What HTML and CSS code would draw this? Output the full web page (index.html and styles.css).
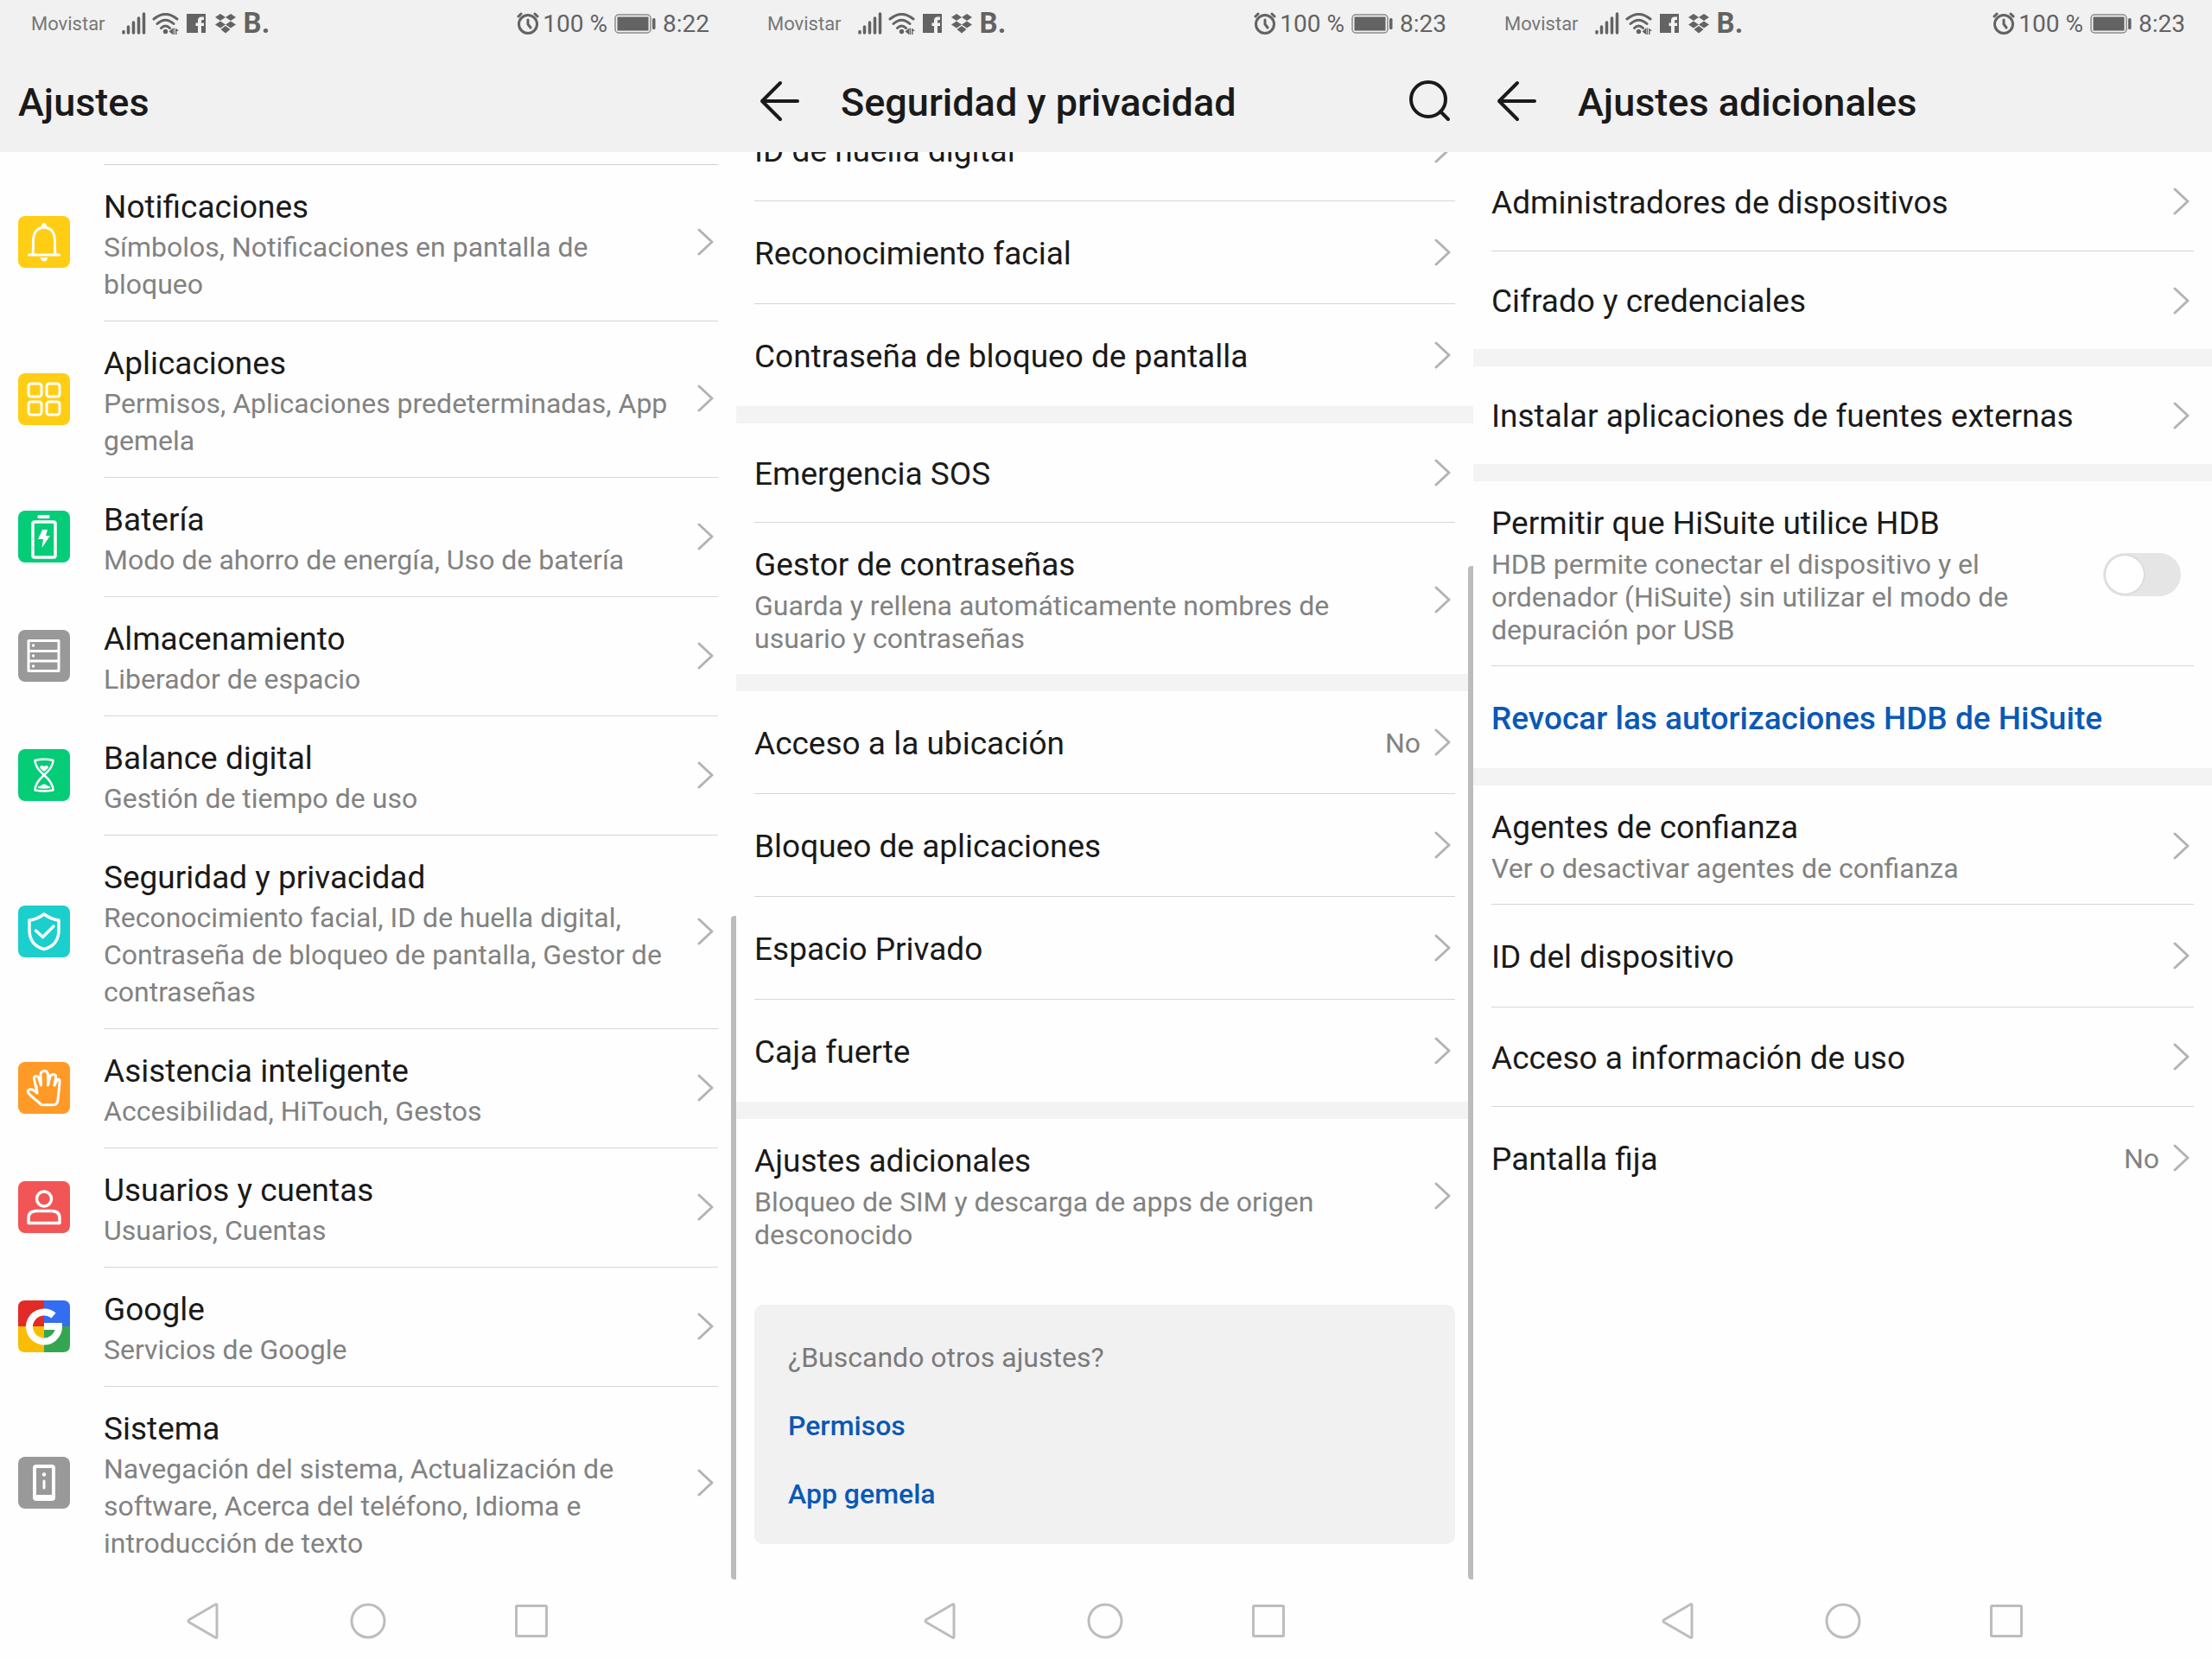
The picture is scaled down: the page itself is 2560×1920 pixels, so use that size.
FILE: index.html
```html
<!DOCTYPE html>
<html lang="es">
<head>
<meta charset="utf-8">
<meta name="viewport" content="width=device-width, initial-scale=1">
<title>Ajustes</title>
<link rel="stylesheet" href="styles.css">
</head>
<body>
<svg class="sprite" aria-hidden="true">
  <symbol id="chevron" viewBox="0 0 20 32"><path d="M2 2 17 16 2 30" fill="none" stroke="currentColor" stroke-width="3" stroke-linecap="round" stroke-linejoin="round"/></symbol>
  <symbol id="arrow" viewBox="0 0 48 48"><path d="M25 3 4 24 25 45M4 24H45" fill="none" stroke="currentColor" stroke-width="4" stroke-linecap="round" stroke-linejoin="round"/></symbol>
  <symbol id="search" viewBox="0 0 48 48"><circle cx="22" cy="22" r="20" fill="none" stroke="currentColor" stroke-width="4"/><path d="M36 36 45 45" fill="none" stroke="currentColor" stroke-width="4" stroke-linecap="round"/></symbol>
  <symbol id="signal" viewBox="0 0 28 26"><path d="M2 22.500V24M7.500 17V24M13.500 12V24M19.500 7V24M25.500 2V24" stroke="currentColor" stroke-width="3.500" stroke-linecap="round"/></symbol>
  <symbol id="wifi" viewBox="0 0 32 26"><g fill="none" stroke="currentColor" stroke-width="3" stroke-linecap="round"><path d="M2 8Q15.500-3 29 8M6 13.500Q15.500 5 25 13.500M10.500 18.500Q15.500 13.500 20.500 18.500"/></g><circle cx="15.500" cy="22.500" r="2.700" fill="currentColor"/><path d="M24 18.500V26L19.500 22.500ZM24.500 18.500H26V26H24.500ZM27 18.500 31 21.500 28.500 22V26H27Z" fill="currentColor"/></symbol>
  <symbol id="facebook" viewBox="0 0 22 22"><path d="M0 0H22V22H17V14H20V10.500H17V8.500Q17 7 18.500 7H20V3.500H17Q13 3.500 13 8V10.500H10.500V14H13V22H0Z" fill="currentColor"/></symbol>
  <symbol id="dropbox" viewBox="0 0 26 23"><path d="M7 0 13 4 7 8 1 4ZM19 0 25 4 19 8 13 4ZM7 8.500 13 12.500 7 16.500 1 12.500ZM19 8.500 25 12.500 19 16.500 13 12.500ZM13 14 18.500 18 13 22.500 7.500 18Z" fill="currentColor"/></symbol>
  <symbol id="alarm" viewBox="0 0 26 26"><g fill="none" stroke="currentColor" stroke-width="3" stroke-linecap="round"><circle cx="13" cy="14" r="10.500"/><path d="M13 9V14L16 18M2 5 5 2M24 5 21 2"/></g></symbol>
  <symbol id="battery" viewBox="0 0 48 23"><rect x="1" y="1" width="41" height="21" rx="4" fill="none" stroke="#8a8a8a" stroke-width="1.500"/><rect x="3.500" y="3.500" width="36" height="16" fill="currentColor"/><rect x="44" y="5" width="3.500" height="13" rx="1.500" fill="currentColor"/></symbol>
  <symbol id="nav-back" viewBox="0 0 44 44"><path d="M36 3.500V40.500Q36 42 34 41L4 23.500Q2 22 4 20.500L34 3Q36 2 36 3.500Z" fill="none" stroke="currentColor" stroke-width="3"/></symbol>
  <symbol id="nav-home" viewBox="0 0 44 44"><circle cx="22" cy="22" r="19" fill="none" stroke="currentColor" stroke-width="3"/></symbol>
  <symbol id="nav-recent" viewBox="0 0 44 44"><rect x="4.500" y="4.500" width="35" height="35" rx="1" fill="none" stroke="currentColor" stroke-width="3"/></symbol>

  <symbol id="bell" viewBox="0 0 60 60"><rect width="60" height="60" rx="8" fill="#ffce14"/><path d="M12.500 45H47.500M17 44Q17.500 40 17.500 28Q18 14 30 13Q42 14 42.500 28Q42.500 40 43 44" fill="none" stroke="#fff" stroke-width="3" stroke-linecap="round"/><path d="M27 13Q27 8 30 8T33 13ZM25.500 48H34.500Q33 52.500 30 52.500T25.500 48Z" fill="#fff"/></symbol>
  <symbol id="apps" viewBox="0 0 60 60"><rect width="60" height="60" rx="8" fill="#ffce14"/><g fill="none" stroke="#fff" stroke-width="3"><rect x="12" y="12" width="15" height="15" rx="3"/><rect x="33" y="12" width="15" height="15" rx="3"/><rect x="12" y="33" width="15" height="15" rx="3"/><rect x="33" y="33" width="15" height="15" rx="3"/></g></symbol>
  <symbol id="power" viewBox="0 0 60 60"><rect width="60" height="60" rx="8" fill="#05cc77"/><rect x="17" y="13" width="26" height="41" rx="2" fill="none" stroke="#fff" stroke-width="3.500"/><rect x="22.500" y="5" width="14" height="4" rx="1.500" fill="#fff"/><path d="M28 22H34L32 29H37L27.500 43 29 33H23Z" fill="#fff"/></symbol>
  <symbol id="storage" viewBox="0 0 60 60"><rect width="60" height="60" rx="8" fill="#999"/><path d="M12 12.500H47V47.500H12ZM12 24.500H47M12 36H47" fill="none" stroke="#fff" stroke-width="3" stroke-linejoin="round"/><g fill="#fff"><circle cx="17.500" cy="18" r="1.700"/><circle cx="17.500" cy="30" r="1.700"/><circle cx="17.500" cy="42" r="1.700"/></g></symbol>
  <symbol id="hourglass" viewBox="0 0 60 60"><rect width="60" height="60" rx="8" fill="#05cc77"/><path d="M19.500 13Q30 10.500 40.500 13Q40.500 21 30 30Q19.500 21 19.500 13ZM30 30Q40.500 39 40.500 47.500Q30 49.500 19.500 47.500Q19.500 39 30 30Z" fill="none" stroke="#fff" stroke-width="2.500" stroke-linejoin="round"/><path d="M30 26Q25 22 25 20.500Q27 18 30 20Q33 18 35 20.500Q35 22 30 26ZM22.500 45Q23 42.500 26 42.500Q30 38.500 34 42.500Q37 42.500 37.500 45Q30 46.500 22.500 45Z" fill="#fff"/></symbol>
  <symbol id="shield" viewBox="0 0 60 60"><rect width="60" height="60" rx="8" fill="#1bcfcd"/><path d="M30 10Q38 16 47 17V28Q47 46 30 50.500Q13 46 13 28V17Q22 16 30 10Z" fill="none" stroke="#fff" stroke-width="3.500" stroke-linejoin="round"/><path d="M20.500 29 28.500 36.500 41 24" fill="none" stroke="#fff" stroke-width="3.500" stroke-linecap="round" stroke-linejoin="round"/></symbol>
  <symbol id="hand" viewBox="0 0 60 60"><rect width="60" height="60" rx="8" fill="#ff9a28"/><path d="M21 31 18.500 20Q18 17 20.500 16.500T24 19L26.500 27 26 15Q26 11 30 10.500T34.500 15V27L37 17Q38 14 41 14.500T43.500 18L42 27 45 21Q48.500 18 48 24L46 44Q45.500 48.500 42 49.500Q34 50 27 49.500L14 38.500Q10 34 12 32.500Q16 30 22 36L21 28" fill="none" stroke="#fff" stroke-width="3" stroke-linejoin="round" stroke-linecap="round"/></symbol>
  <symbol id="user" viewBox="0 0 60 60"><rect width="60" height="60" rx="8" fill="#f25555"/><circle cx="30" cy="20.500" r="8.500" fill="none" stroke="#fff" stroke-width="3.500"/><path d="M12 48.500V43Q12 34.500 21 34.500H39Q48 34.500 48 43V48.500Z" fill="none" stroke="#fff" stroke-width="3.500" stroke-linejoin="round"/></symbol>
  <symbol id="google" viewBox="0 0 60 60"><path d="M30 0H8Q0 0 0 8V30H30Z" fill="#e12b27"/><path d="M30 0H52Q60 0 60 8V30H30Z" fill="#346df1"/><path d="M0 30H30V60H8Q0 60 0 52Z" fill="#fbbc05"/><path d="M30 30H60V52Q60 60 52 60H30Z" fill="#34a651"/><path d="M41 17.500A17 17 0 1 0 47 30H30" fill="none" stroke="#fff" stroke-width="8"/></symbol>
  <symbol id="phone-info" viewBox="0 0 60 60"><rect width="60" height="60" rx="8" fill="#999"/><path d="M21 9H39Q43 9 43 13V47Q43 51 39 51H21Q17 51 17 47V13Q17 9 21 9ZM21 13V44H39V13Z" fill="#fff" fill-rule="evenodd"/><circle cx="30" cy="20.500" r="2.200" fill="#fff"/><path d="M30 28V36" stroke="#fff" stroke-width="3" stroke-linecap="round"/></symbol>
</svg>

<main class="screens">
  <section class="screen">
    <header class="top">
      <div class="status">
        <span class="carrier">Movistar</span>
        <svg class="signal"><use href="#signal"/></svg><svg class="wifi"><use href="#wifi"/></svg><svg class="facebook"><use href="#facebook"/></svg><svg class="dropbox"><use href="#dropbox"/></svg><span class="brand">B.</span>
        <svg class="alarm"><use href="#alarm"/></svg><span class="level">100 %</span><svg class="battery"><use href="#battery"/></svg><time class="clock">8:22</time>
      </div>
      <div class="bar"><h1 class="heading">Ajustes</h1></div>
    </header>
    <div class="scroll">
      <ul class="menu">
        <li><a class="entry" href="#"><svg class="tile"><use href="#bell"/></svg><span class="body"><span class="text"><span class="title">Notificaciones</span><span class="summary">Símbolos, Notificaciones en pantalla de bloqueo</span></span><svg class="chevron"><use href="#chevron"/></svg></span></a></li>
        <li><a class="entry" href="#"><svg class="tile"><use href="#apps"/></svg><span class="body"><span class="text"><span class="title">Aplicaciones</span><span class="summary">Permisos, Aplicaciones predeterminadas, App gemela</span></span><svg class="chevron"><use href="#chevron"/></svg></span></a></li>
        <li><a class="entry" href="#"><svg class="tile"><use href="#power"/></svg><span class="body"><span class="text"><span class="title">Batería</span><span class="summary">Modo de ahorro de energía, Uso de batería</span></span><svg class="chevron"><use href="#chevron"/></svg></span></a></li>
        <li><a class="entry" href="#"><svg class="tile"><use href="#storage"/></svg><span class="body"><span class="text"><span class="title">Almacenamiento</span><span class="summary">Liberador de espacio</span></span><svg class="chevron"><use href="#chevron"/></svg></span></a></li>
        <li><a class="entry" href="#"><svg class="tile"><use href="#hourglass"/></svg><span class="body"><span class="text"><span class="title">Balance digital</span><span class="summary">Gestión de tiempo de uso</span></span><svg class="chevron"><use href="#chevron"/></svg></span></a></li>
        <li><a class="entry" href="#"><svg class="tile"><use href="#shield"/></svg><span class="body"><span class="text"><span class="title">Seguridad y privacidad</span><span class="summary">Reconocimiento facial, ID de huella digital, Contraseña de bloqueo de pantalla, Gestor de contraseñas</span></span><svg class="chevron"><use href="#chevron"/></svg></span></a></li>
        <li><a class="entry" href="#"><svg class="tile"><use href="#hand"/></svg><span class="body"><span class="text"><span class="title">Asistencia inteligente</span><span class="summary">Accesibilidad, HiTouch, Gestos</span></span><svg class="chevron"><use href="#chevron"/></svg></span></a></li>
        <li><a class="entry" href="#"><svg class="tile"><use href="#user"/></svg><span class="body"><span class="text"><span class="title">Usuarios y cuentas</span><span class="summary">Usuarios, Cuentas</span></span><svg class="chevron"><use href="#chevron"/></svg></span></a></li>
        <li><a class="entry" href="#"><svg class="tile"><use href="#google"/></svg><span class="body"><span class="text"><span class="title">Google</span><span class="summary">Servicios de Google</span></span><svg class="chevron"><use href="#chevron"/></svg></span></a></li>
        <li><a class="entry" href="#"><svg class="tile"><use href="#phone-info"/></svg><span class="body"><span class="text"><span class="title">Sistema</span><span class="summary">Navegación del sistema, Actualización de software, Acerca del teléfono, Idioma e introducción de texto</span></span><svg class="chevron"><use href="#chevron"/></svg></span></a></li>
      </ul>
      <div class="thumb thumb-short"></div>
    </div>
    <nav class="keys">
      <button type="button" aria-label="Atrás"><svg><use href="#nav-back"/></svg></button>
      <button type="button" aria-label="Inicio"><svg><use href="#nav-home"/></svg></button>
      <button type="button" aria-label="Recientes"><svg><use href="#nav-recent"/></svg></button>
    </nav>
  </section>

  <section class="screen">
    <header class="top">
      <div class="status">
        <span class="carrier">Movistar</span>
        <svg class="signal"><use href="#signal"/></svg><svg class="wifi"><use href="#wifi"/></svg><svg class="facebook"><use href="#facebook"/></svg><svg class="dropbox"><use href="#dropbox"/></svg><span class="brand">B.</span>
        <svg class="alarm"><use href="#alarm"/></svg><span class="level">100 %</span><svg class="battery"><use href="#battery"/></svg><time class="clock">8:23</time>
      </div>
      <div class="bar"><button class="tool back" type="button" aria-label="Volver"><svg><use href="#arrow"/></svg></button><h1 class="heading">Seguridad y privacidad</h1><button class="tool" type="button" aria-label="Buscar"><svg><use href="#search"/></svg></button></div>
    </header>
    <div class="scroll">
      <ul class="group scrolled">
        <li><a class="row" href="#"><span class="title">ID de huella digital</span><svg class="chevron"><use href="#chevron"/></svg></a></li>
        <li><a class="row" href="#"><span class="title">Reconocimiento facial</span><svg class="chevron"><use href="#chevron"/></svg></a></li>
        <li><a class="row" href="#"><span class="title">Contraseña de bloqueo de pantalla</span><svg class="chevron"><use href="#chevron"/></svg></a></li>
      </ul>
      <ul class="group">
        <li><a class="row compact" href="#"><span class="title">Emergencia SOS</span><svg class="chevron"><use href="#chevron"/></svg></a></li>
        <li><a class="row detailed" href="#"><span class="text"><span class="title">Gestor de contraseñas</span><span class="summary">Guarda y rellena automáticamente nombres de usuario y contraseñas</span></span><svg class="chevron"><use href="#chevron"/></svg></a></li>
      </ul>
      <ul class="group">
        <li><a class="row" href="#"><span class="title">Acceso a la ubicación</span><span class="value">No</span><svg class="chevron"><use href="#chevron"/></svg></a></li>
        <li><a class="row" href="#"><span class="title">Bloqueo de aplicaciones</span><svg class="chevron"><use href="#chevron"/></svg></a></li>
        <li><a class="row" href="#"><span class="title">Espacio Privado</span><svg class="chevron"><use href="#chevron"/></svg></a></li>
        <li><a class="row" href="#"><span class="title">Caja fuerte</span><svg class="chevron"><use href="#chevron"/></svg></a></li>
      </ul>
      <ul class="group">
        <li><a class="row detailed" href="#"><span class="text"><span class="title">Ajustes adicionales</span><span class="summary">Bloqueo de SIM y descarga de apps de origen desconocido</span></span><svg class="chevron"><use href="#chevron"/></svg></a></li>
      </ul>
      <aside class="hints">
        <p>¿Buscando otros ajustes?</p>
        <a href="#">Permisos</a>
        <a href="#">App gemela</a>
      </aside>
      <div class="thumb thumb-long"></div>
    </div>
    <nav class="keys">
      <button type="button" aria-label="Atrás"><svg><use href="#nav-back"/></svg></button>
      <button type="button" aria-label="Inicio"><svg><use href="#nav-home"/></svg></button>
      <button type="button" aria-label="Recientes"><svg><use href="#nav-recent"/></svg></button>
    </nav>
  </section>

  <section class="screen">
    <header class="top">
      <div class="status">
        <span class="carrier">Movistar</span>
        <svg class="signal"><use href="#signal"/></svg><svg class="wifi"><use href="#wifi"/></svg><svg class="facebook"><use href="#facebook"/></svg><svg class="dropbox"><use href="#dropbox"/></svg><span class="brand">B.</span>
        <svg class="alarm"><use href="#alarm"/></svg><span class="level">100 %</span><svg class="battery"><use href="#battery"/></svg><time class="clock">8:23</time>
      </div>
      <div class="bar"><button class="tool back" type="button" aria-label="Volver"><svg><use href="#arrow"/></svg></button><h1 class="heading">Ajustes adicionales</h1></div>
    </header>
    <div class="scroll">
      <ul class="group">
        <li><a class="row compact" href="#"><span class="title">Administradores de dispositivos</span><svg class="chevron"><use href="#chevron"/></svg></a></li>
        <li><a class="row compact" href="#"><span class="title">Cifrado y credenciales</span><svg class="chevron"><use href="#chevron"/></svg></a></li>
      </ul>
      <ul class="group">
        <li><a class="row compact" href="#"><span class="title">Instalar aplicaciones de fuentes externas</span><svg class="chevron"><use href="#chevron"/></svg></a></li>
      </ul>
      <ul class="group">
        <li><label class="row detailed" for="hdb"><span class="text"><span class="title">Permitir que HiSuite utilice HDB</span><span class="summary">HDB permite conectar el dispositivo y el ordenador (HiSuite) sin utilizar el modo de depuración por USB</span></span><input class="switch" id="hdb" type="checkbox"></label></li>
        <li><a class="row action" href="#"><span class="title">Revocar las autorizaciones HDB de HiSuite</span></a></li>
      </ul>
      <ul class="group">
        <li><a class="row detailed" href="#"><span class="text"><span class="title">Agentes de confianza</span><span class="summary">Ver o desactivar agentes de confianza</span></span><svg class="chevron"><use href="#chevron"/></svg></a></li>
        <li><a class="row" href="#"><span class="title">ID del dispositivo</span><svg class="chevron"><use href="#chevron"/></svg></a></li>
        <li><a class="row compact" href="#"><span class="title">Acceso a información de uso</span><svg class="chevron"><use href="#chevron"/></svg></a></li>
        <li><a class="row" href="#"><span class="title">Pantalla fija</span><span class="value">No</span><svg class="chevron"><use href="#chevron"/></svg></a></li>
      </ul>
    </div>
    <nav class="keys">
      <button type="button" aria-label="Atrás"><svg><use href="#nav-back"/></svg></button>
      <button type="button" aria-label="Inicio"><svg><use href="#nav-home"/></svg></button>
      <button type="button" aria-label="Recientes"><svg><use href="#nav-recent"/></svg></button>
    </nav>
  </section>
</main>
</body>
</html>
```
FILE: styles.css
```css
* {
  box-sizing: border-box;
}

body {
  margin: 0;
  background: #fefefe;
  color: #1a1a1a;
  font-family: Roboto, "Liberation Sans", sans-serif;
}

h1,
p,
ul {
  margin: 0;
  padding: 0;
}

ul {
  list-style: none;
}

a {
  color: inherit;
  text-decoration: none;
}

button {
  padding: 0;
  border: 0;
  background: none;
  color: inherit;
}

svg {
  display: block;
  flex: none;
}

.sprite {
  display: none;
}

.screens {
  display: grid;
  grid-template-columns: 852fr 853fr 855fr;
  min-height: 100vh;
}

.screen {
  display: flex;
  flex-direction: column;
  min-width: 0;
}

/* Status bar and title */

.top {
  background: #f1f1f1;
}

.status {
  display: flex;
  align-items: center;
  height: 54px;
  padding: 0 31px 0 36px;
  color: #636363;
}

.carrier {
  margin-right: 19px;
  color: #777;
  font-size: 22px;
}

.signal {
  width: 28px;
  height: 26px;
  margin-right: 7px;
}

.wifi {
  width: 32px;
  height: 26px;
  margin-right: 8px;
}

.facebook {
  width: 22px;
  height: 22px;
  margin-right: 10px;
}

.dropbox {
  width: 26px;
  height: 23px;
  margin-right: 8px;
}

.brand {
  margin-right: auto;
  font-size: 33px;
  font-weight: 700;
  line-height: 32px;
}

.alarm {
  width: 26px;
  height: 26px;
  margin-right: 4px;
}

.level,
.clock {
  font-size: 28px;
}

.battery {
  width: 48px;
  height: 23px;
  margin: 0 8px;
}

.bar {
  display: flex;
  align-items: center;
  height: 122px;
  padding: 4px 21px 0;
}

.heading {
  flex: 1;
  padding-top: 3px;
  font-size: 45px;
  font-weight: 500;
  line-height: 52px;
}

.tool {
  padding: 0 5px;
}

.tool svg {
  width: 48px;
  height: 48px;
}

.back {
  margin-right: 42px;
}

/* Scrolling area */

.scroll {
  position: relative;
  flex: 1;
  overflow: hidden;
}

.thumb {
  position: absolute;
  right: 0;
  bottom: 0;
  width: 6px;
  border-radius: 4px 0 0 4px;
  background: #bcbcbc;
}

.thumb-short {
  top: 53.5%;
}

.thumb-long {
  top: 29%;
}

.text {
  flex: 1;
  min-width: 0;
}

.title {
  display: block;
  flex: 1;
  font-size: 37px;
  line-height: 50px;
}

.summary {
  display: block;
  color: #828282;
  font-size: 32px;
  line-height: 38px;
}

.chevron {
  width: 20px;
  height: 32px;
  margin: 0 4px 0 16px;
  color: #b3b3b3;
}

.value {
  padding-top: 2px;
  color: #828282;
  font-size: 32px;
}

/* Main settings list */

.menu {
  padding-top: 14px;
}

.entry {
  display: flex;
  align-items: center;
  gap: 39px;
  padding: 0 21px;
}

.tile {
  width: 60px;
  height: 60px;
  margin-bottom: 2px;
}

.body {
  display: flex;
  flex: 1;
  align-items: center;
  min-width: 0;
  padding: 24px 0 20px;
  border-bottom: 1px solid #d6d6d6;
}

.menu li:first-child .body {
  border-top: 1px solid #d0d0d0;
}

.menu li:last-child .body {
  border-bottom: 0;
}

.menu .summary {
  line-height: 43px;
}

.menu .chevron {
  margin-bottom: 6px;
}

/* Grouped lists */

.group {
  padding: 0 21px;
}

.group + .group {
  border-top: 20px solid #f3f3f3;
}

.scrolled {
  margin-top: -62px;
}

.row {
  display: flex;
  align-items: center;
  min-height: 119px;
  border-bottom: 1px solid #d6d6d6;
}

.row > .title {
  padding-top: 3px;
}

.group li:last-child .row {
  min-height: 118px;
  border-bottom: 0;
}

.group .row.compact {
  min-height: 115px;
}

.group li:last-child .row.compact {
  min-height: 113px;
}

.detailed {
  padding: 24px 0 22px;
}

.detailed .summary {
  margin-top: 3px;
  padding-right: 70px;
}

.action {
  color: #0a59b5;
}

.action .title {
  font-weight: 500;
}

.switch {
  flex: none;
  display: flex;
  align-items: center;
  width: 90px;
  height: 50px;
  margin: 0 15px 0 0;
  padding: 0 3px;
  border-radius: 25px;
  background: #e5e5e5;
  appearance: none;
}

.switch::before {
  content: "";
  width: 44px;
  height: 44px;
  border-radius: 50%;
  background: #fff;
  box-shadow: 0 0 3px #0000002a;
}

.switch:checked {
  justify-content: flex-end;
  background: #0a59b5;
}

.hints {
  display: flex;
  flex-direction: column;
  margin: 40px 21px;
  padding: 22px 39px 18px;
  border-radius: 10px;
  background: #f1f1f1;
  font-size: 32px;
  line-height: 79px;
}

.hints p {
  color: #7b7b7b;
}

.hints a {
  color: #0a59b5;
  font-weight: 500;
}

/* Navigation keys */

.keys {
  display: flex;
  align-items: center;
  justify-content: center;
  gap: 145px;
  height: 94px;
  padding-top: 2px;
  color: #bdbdbd;
}

.keys svg {
  width: 44px;
  height: 44px;
}
```
